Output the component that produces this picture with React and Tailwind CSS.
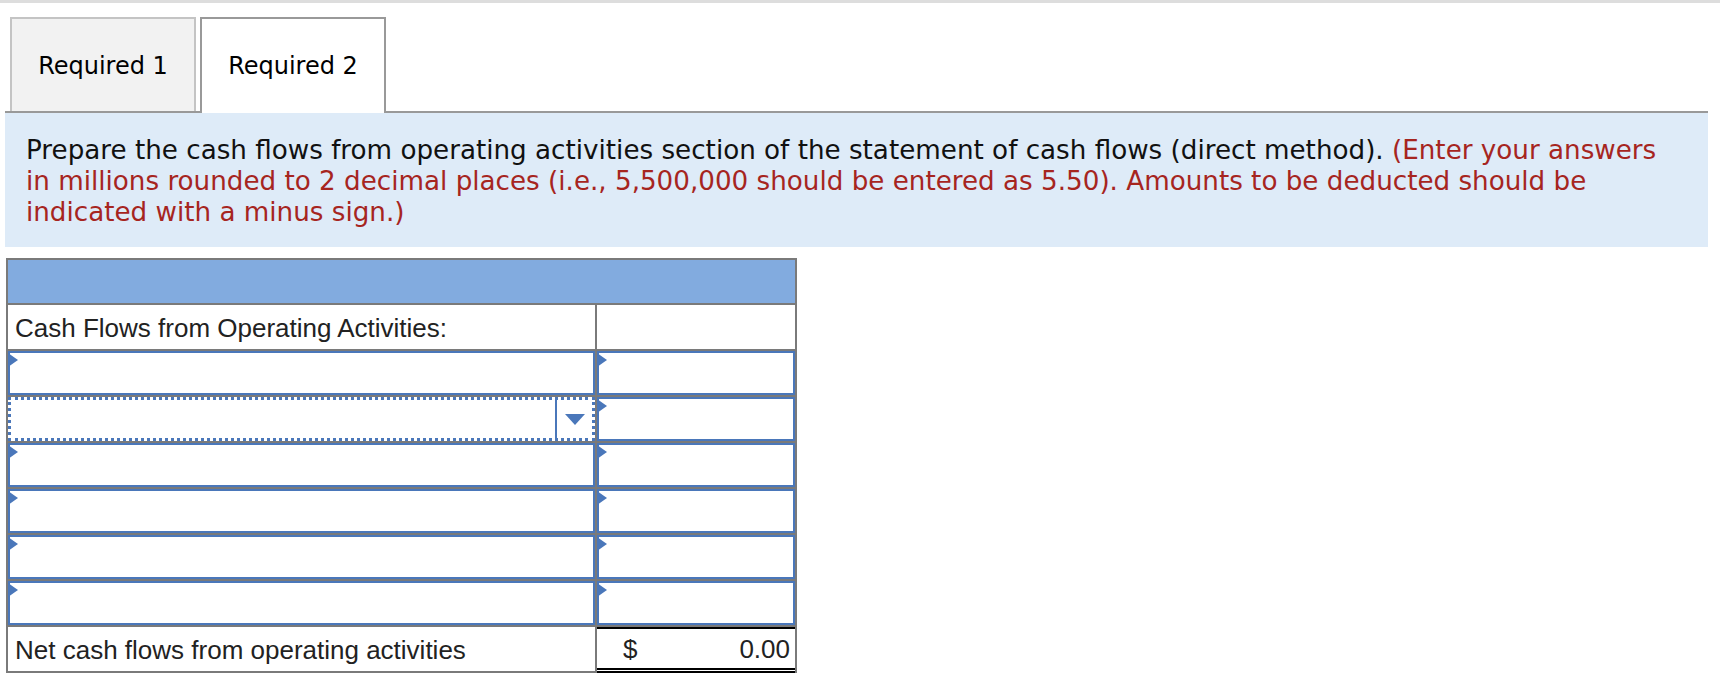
import React from 'react';

const BLUE = 'border-[#4a77ba]';

const Marker = () => (
    <svg className="absolute -left-[2px] top-0" width="10" height="14" viewBox="0 0 10 14">
        <polygon points="0,0 10,7 0,14" fill="#4a77ba" />
    </svg>
);

const InputBox = ({ marker = true }) => (
    <div className={`relative h-full w-full border-2 ${BLUE} bg-white`}>
        {marker && <Marker />}
    </div>
);

const SelectBox = () => (
    <div className="flex h-full w-full border-[3px] border-dotted border-[#4a77ba] bg-white">
        <div className="flex-1" />
        <div className="flex w-[37px] items-center justify-center border-l-2 border-[#4a77ba]">
            <svg width="20" height="11" viewBox="0 0 20 11">
                <polygon points="0,0 20,0 10,11" fill="#4a77ba" />
            </svg>
        </div>
    </div>
);

const App = () => {
    const rows = ['input', 'select', 'input', 'input', 'input', 'input'];

    return (
        <div className="h-[684px] w-[1720px] overflow-hidden bg-white">
            <div className="h-[3px] bg-[#dddddd]" />
            <div className="ml-[5px] w-[1703px]">
                <div className="mt-[14px] flex items-end gap-[4px] border-b-2 border-[#999999] pl-[5px] font-['DejaVu_Sans',sans-serif] text-[24px] text-black">
                    <div className="flex h-[94px] w-[186px] items-center justify-center border-2 border-b-0 border-[#c4c4c4] bg-[#f2f2f2] pt-[2px]">
                        Required 1
                    </div>
                    <div className="relative -mb-[2px] flex h-[96px] w-[186px] items-center justify-center border-2 border-b-0 border-[#999999] bg-white">
                        Required 2
                    </div>
                </div>

                <div className="bg-[#deebf8] pb-[19px] pl-[21px] pr-[40px] pt-[22px] font-['DejaVu_Sans',sans-serif] text-[26.2px] leading-[31px] text-[#111111]">
                    Prepare the cash flows from operating activities section of the statement of cash flows (direct method).{' '}
                    <span className="text-[#a6251f]">
                        (Enter your answers in millions rounded to 2 decimal places (i.e., 5,500,000 should be entered as 5.50). Amounts to be deducted should be indicated with a minus sign.)
                    </span>
                </div>

                <div className="ml-[1px] mt-[11px] w-[791px] border-2 border-b-0 border-[#7a7a7a] font-['Liberation_Sans',Arial,sans-serif] text-[26px] text-[#222222]">
                    <div className="h-[45px] border-b-2 border-[#7a7a7a] bg-[#82abdf]" />
                    <div className="flex h-[46px] border-b-2 border-[#7a7a7a]">
                        <div className="flex w-[589px] items-center border-r-2 border-[#7a7a7a] pl-[7px] pt-[2px]">
                            Cash Flows from Operating Activities:
                        </div>
                        <div className="flex-1" />
                    </div>
                    {rows.map((type, i) => (
                        <div key={i} className="flex h-[46px] border-b-2 border-[#7a7a7a]">
                            <div className="w-[589px] border-r-2 border-[#7a7a7a]">
                                {type === 'select' ? <SelectBox /> : <InputBox />}
                            </div>
                            <div className="flex-1">
                                <InputBox />
                            </div>
                        </div>
                    ))}
                    <div className="flex h-[46px]">
                        <div className="flex w-[589px] items-center border-b-2 border-r-2 border-[#7a7a7a] pl-[7px] pt-[2px]">
                            Net cash flows from operating activities
                        </div>
                        <div className="flex flex-1 items-center justify-between border-b-[5px] border-t-2 border-double border-black pl-[26px] pr-[5px] pt-[2px]">
                            <span>$</span>
                            <span>0.00</span>
                        </div>
                    </div>
                </div>
            </div>
        </div>
    );
};

export default App;
